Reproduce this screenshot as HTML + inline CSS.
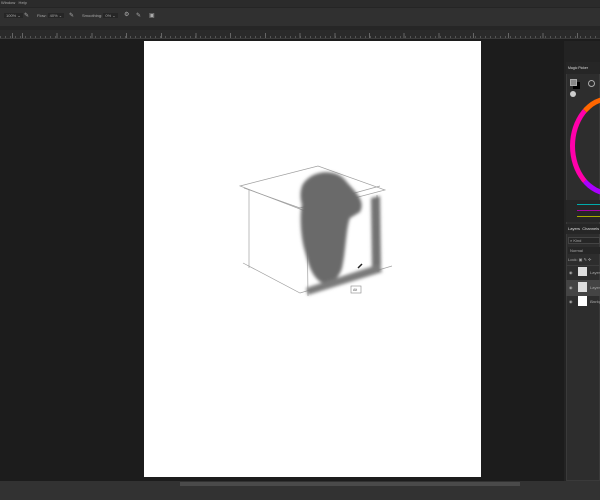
<!DOCTYPE html>
<html><head><style>
body{margin:0;width:600px;height:500px;background:#1c1c1c;overflow:hidden;position:relative;font-family:"Liberation Sans",sans-serif;color:#bbb}
div{position:absolute;box-sizing:border-box}
.t{font-size:4px;color:#aaa}
</style></head><body>
<div style="left:0;top:0;width:600px;height:7px;background:#2b2b2b"></div>
<div class="t" style="left:1px;top:0px">Window&nbsp;&nbsp;&nbsp;Help</div>
<div style="left:0;top:7px;width:600px;height:19px;background:#303030;border-top:1px solid #252525"></div>
<div class="t" style="left:4px;top:13px;background:#262626;padding:0 2px">100% ⌄</div>
<div class="t" style="left:24px;top:12px;font-size:6px">✎</div>
<div class="t" style="left:37px;top:13px">Flow: <span style="background:#262626;padding:0 2px">40% ⌄</span></div>
<div class="t" style="left:69px;top:12px;font-size:6px">✎</div>
<div class="t" style="left:82px;top:13px">Smoothing: <span style="background:#262626;padding:0 2px">0% ⌄</span></div>
<div class="t" style="left:124px;top:11px;font-size:6px">⚙</div>
<div class="t" style="left:136px;top:12px;font-size:6px">✎</div>
<div class="t" style="left:149px;top:12px;font-size:6px">▣</div>
<div style="left:0;top:26px;width:600px;height:4px;background:#262626"></div>
<div style="left:0;top:30px;width:600px;height:9px;background:#2a2a2a;border-bottom:1px solid #3a3a3a"></div>
<div style="left:0;top:36px;width:600px;height:2px;background-image:repeating-linear-gradient(90deg,#555 0 1px,transparent 1px 5px)"></div>
<div style="left:0;top:33px;width:600px;height:5px;background-image:repeating-linear-gradient(90deg,#666 0 1px,transparent 1px 34.7px);background-position:22px 0"></div>
<div style="left:0;top:39px;width:600px;height:2px;background:#1c1c1c"></div>
<div style="left:144px;top:41px;width:337px;height:436px;background:#fff"></div>
<svg style="position:absolute;left:0;top:0" width="600" height="500">
<defs><filter id="b"><feGaussianBlur stdDeviation="1.5"/></filter></defs>
<g stroke="#888" stroke-width="0.7" fill="none" opacity="0.8">
<path d="M240 186 L318 166 L385 190 L305 211 Z"/>
<path d="M249 190 L249 268 M307 212 L308 296 M377 195 L378 272"/>
<path d="M243 263 L300 293 L392 266"/>
<path d="M244 188 L300 208 L380 186"/>
</g>
<g filter="url(#b)">
<path d="M302 186 C310 170 335 168 345 180 C355 192 366 200 360 212 L350 218 C346 228 346 250 342 268 C338 282 325 287 318 280 C310 272 308 262 304 248 C300 232 300 212 302 205 C300 198 300 192 302 186 Z" fill="#6a6a6a"/>
<path d="M371 198 L380 196 L381 266 L372 268 Z" fill="#727272"/>
<path d="M306 288 L380 264 L382 272 L308 295 Z" fill="#7a7a7a"/>
</g>
<rect x="351" y="286" width="10" height="7" fill="#fff" stroke="#888" stroke-width="0.6"/>
<text x="353" y="291" font-size="3.5" fill="#555" font-family="Liberation Sans">Alt</text>
<path d="M358 268 L362 264" stroke="#222" stroke-width="1.5"/>
</svg>
<div style="left:0;top:481px;width:600px;height:19px;background:#323232"></div>
<div style="left:180px;top:482px;width:340px;height:4px;background:#4a4a4a"></div>
<div style="left:564px;top:41px;width:36px;height:440px;background:#232323"></div>
<div style="left:566px;top:62px;width:34px;height:419px;background:#2d2d2d;border:1px solid #3a3a3a"></div>
<div style="left:566px;top:62px;width:34px;height:12px;background:#262626"></div>
<div class="t" style="left:568px;top:66px;font-size:3.5px;color:#ddd">Magic Picker</div>
<div style="left:573px;top:82px;width:7px;height:7px;background:#000"></div>
<div style="left:570px;top:79px;width:7px;height:7px;background:#888;border:1px solid #aaa"></div>
<div style="left:570px;top:91px;width:6px;height:6px;border-radius:50%;background:#ccc"></div>
<div style="left:588px;top:80px;width:7px;height:7px;border-radius:50%;border:1px solid #aaa"></div>
<div style="left:570px;top:96px;width:80px;height:100px;border-radius:50%;border:5px solid;border-color:#f60 transparent #a0f #f0a;"></div>
<div style="left:566px;top:200px;width:34px;height:22px;background:#262626"></div>
<div style="left:577px;top:204px;width:23px;height:1px;background:#0aa"></div>
<div style="left:577px;top:210px;width:23px;height:1px;background:#a0a"></div>
<div style="left:577px;top:216px;width:23px;height:1px;background:#aa0"></div>
<div style="left:566px;top:224px;width:34px;height:10px;background:#262626"></div>
<div class="t" style="left:568px;top:226px;color:#ddd">Layers&nbsp;&nbsp;Channels</div>
<div style="left:568px;top:237px;width:32px;height:7px;background:#262626;border:1px solid #444"></div>
<div class="t" style="left:570px;top:238px">⌕ Kind</div>
<div style="left:568px;top:247px;width:32px;height:7px;background:#262626"></div>
<div class="t" style="left:570px;top:248px">Normal</div>
<div class="t" style="left:568px;top:257px">Lock: ▣ ✎ ✣</div>
<div style="left:566px;top:265px;width:34px;height:15px;border-top:1px solid #3c3c3c"></div>
<div style="left:578px;top:267px;width:9px;height:9px;background:#ddd"></div>
<div class="t" style="left:590px;top:270px">Layer</div>
<div style="left:566px;top:280px;width:34px;height:16px;background:#444"></div>
<div style="left:578px;top:282px;width:9px;height:10px;background:#ddd"></div>
<div class="t" style="left:590px;top:285px">Layer</div>
<div style="left:578px;top:296px;width:9px;height:10px;background:#fff"></div>
<div class="t" style="left:590px;top:299px;font-style:italic">Backgr</div>
<div class="t" style="left:569px;top:270px">◉</div>
<div class="t" style="left:569px;top:285px">◉</div>
<div class="t" style="left:569px;top:299px">◉</div>
</body></html>
